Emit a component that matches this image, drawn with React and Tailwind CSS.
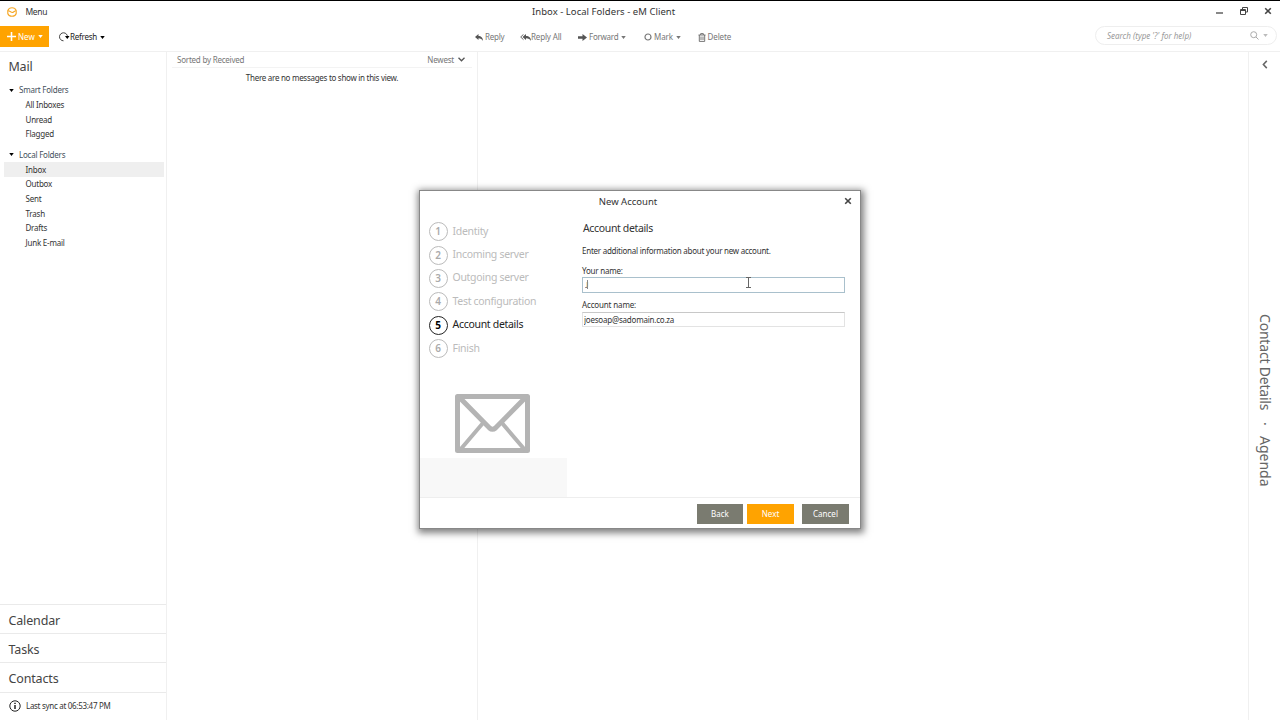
import React, { useState } from 'react';

const smartFolders = ['All Inboxes', 'Unread', 'Flagged'];
const localFolders = ['Inbox', 'Outbox', 'Sent', 'Trash', 'Drafts', 'Junk E-mail'];
const sections = ['Calendar', 'Tasks', 'Contacts'];
const steps = [
  'Identity',
  'Incoming server',
  'Outgoing server',
  'Test configuration',
  'Account details',
  'Finish'
];

const Caret = ({ className }) => (
  <svg viewBox="0 0 6 4" className={`w-[5px] h-[3px] shrink-0 ${className}`} fill="currentColor">
    <path d="M0 0h6L3 4z" />
  </svg>
);

const CloseIcon = ({ className }) => (
  <svg viewBox="0 0 8 8" className={`w-[8px] h-[8px] ${className}`} stroke="currentColor" strokeWidth="1.6">
    <path d="M1.200 1.200l5.600 5.600M6.800 1.200l-5.600 5.600" />
  </svg>
);

const TitleBar = () => (
  <header className="h-[23px] flex items-center border-t border-black shrink-0">
    <div className="w-[532px] flex items-center">
      <svg viewBox="0 0 10 10" className="w-[10px] h-[10px] ml-[6.500px]" fill="none" stroke="#f5a623" strokeWidth="1.100">
        <path d="M.8 3.500C1.600 1.600 3 .8 5 .8s3.500.9 4.200 2.700v3C8.800 8.200 7.500 9.200 5 9.200S1.200 8.200.8 6.500z" />
        <path d="M1 3.800c2 .2 3 1.700 4.200 1.700S7.500 3.800 9 3.800" />
      </svg>
      <span className="ml-[9px] text-[8.500px] tracking-[-0.35px] text-[#333]">Menu</span>
    </div>
    <h1 className="flex-1 text-[9.500px] tracking-[0.04px] text-[#333]">Inbox - Local Folders - eM Client</h1>
    <div className="flex items-center pr-[8px] text-[#444]">
      <span className="w-[7px] h-[2px] bg-[#888] mt-[1px] mr-[17px]" />
      <svg viewBox="0 0 8 8" className="w-[8px] h-[8px] mr-[16px] -mt-[3px]" fill="none" stroke="currentColor">
        <path d="M.5 2.500h5v5h-5zM.5 3.500h5M2.500 2.500v-2h5v4.500h-2" />
      </svg>
      <CloseIcon className="-mt-[3px]" />
    </div>
  </header>
);

const Toolbar = () => (
  <div className="h-[29px] flex items-center shrink-0 border-b border-[#f0f0f0] text-[8px] text-[#777] tracking-[-0.25px]">
    <div className="w-[475px] flex items-center">
      <button className="w-[48.500px] h-[21px] pl-[7px] mb-[1px] flex items-center bg-[#ffa300] text-white">
        <svg viewBox="0 0 8 8" className="w-[9px] h-[9px]" stroke="currentColor" strokeWidth="1.4">
          <path d="M4 0v8M0 4h8" />
        </svg>
        <span className="ml-[2px] tracking-normal">New</span>
        <Caret className="ml-[3px]" />
      </button>
      <button className="ml-[10.500px] flex items-center text-[#222]">
        <svg viewBox="0 0 11 10" className="w-[11px] h-[10px]" fill="none" stroke="#444">
          <path d="M4.500 8.800A4 4 0 1 1 8.500 5" />
          <path d="M6 4h4.500L8.300 7z" fill="#000" stroke="none" />
        </svg>
        <span>Refresh</span>
        <Caret className="ml-[3px] text-black" />
      </button>
    </div>
    <div className="flex-1 flex items-center">
      <button className="w-[45px] flex items-center">
        <svg viewBox="0 0 8 7" className="w-[8px] h-[7px] mr-[2px]" fill="#555">
          <path d="M0 3l3.500-3v2C6 2 8 3.500 8 7 7 5 5.500 4.200 3.500 4.200V6z" />
        </svg>
        <span>Reply</span>
      </button>
      <button className="w-[58px] flex items-center">
        <svg viewBox="0 0 11 7" className="w-[11px] h-[7px]" fill="#555">
          <path d="M2.500 3L6 0v2c3 0 5 1.500 5 5-1-2-2.500-2.800-5-2.800V6z" />
          <path d="M3.500.3L.7 3l2.800 2.700" fill="none" stroke="#555" strokeWidth=".9" />
        </svg>
        <span className="tracking-[-0.15px]">Reply All</span>
      </button>
      <button className="w-[66px] flex items-center">
        <svg viewBox="0 0 9 7" className="w-[9px] h-[7px] mr-[2px]" fill="#555">
          <path d="M0 2.300h4.500V0L9 3.500 4.500 7V4.700H0z" />
        </svg>
        <span>Forward</span>
        <Caret className="ml-[3px]" />
      </button>
      <button className="w-[54px] flex items-center">
        <svg viewBox="0 0 8 8" className="w-[8px] h-[8px] mr-[2px]" fill="none" stroke="currentColor" strokeWidth="1.2">
          <circle cx="4" cy="4" r="3" />
        </svg>
        <span className="tracking-[-0.1px]">Mark</span>
        <Caret className="ml-[3px]" />
      </button>
      <button className="flex items-center">
        <svg viewBox="0 0 8 9" className="w-[8px] h-[9px]" fill="none" stroke="#666" strokeWidth=".9">
          <path d="M.5 2h7M2.700 2V.6h2.600V2M1.300 2v6.400h5.400V2M3 3.500V7M5 3.500V7" />
        </svg>
        <span className="ml-[1.500px] tracking-[-0.1px]">Delete</span>
      </button>
    </div>
    <div className="w-[182px] h-[19px] mr-[3px] mb-[3px] pl-[11px] pr-[8px] flex items-center rounded-full border border-[#eee] text-[#999]">
      <span className="flex-1 italic tracking-normal">Search (type '?' for help)</span>
      <svg viewBox="0 0 9 9" className="w-[9px] h-[9px] mr-[4px]" fill="none" stroke="#aaa">
        <circle cx="3.700" cy="3.700" r="3" />
        <path d="M6 6l2.500 2.500" />
      </svg>
      <Caret className="text-[#bbb]" />
    </div>
  </div>
);

const FolderGroup = ({ title, folders, selected }) => (
  <div className="mb-[6px]">
    <div className="h-[14.660px] pl-[9px] flex items-center text-[#44505c]">
      <Caret className="text-black" />
      <span className="ml-[5px]">{title}</span>
    </div>
    {folders.map((name) => (
      <div
        key={name}
        className={`h-[14.660px] ml-[4px] mr-[2px] pl-[21.500px] flex items-center ${name === selected ? 'bg-[#efefef]' : ''}`}
      >
        {name}
      </div>
    ))}
  </div>
);

const Sidebar = () => (
  <aside className="w-[167px] flex flex-col border-r border-[#f0f0f0] text-[8px] tracking-[-0.22px] text-[#333]">
    <h2 className="h-[31px] pb-[1px] pl-[8.500px] flex items-center text-[12.500px] text-[#444]">Mail</h2>
    <div className="flex-1">
      <FolderGroup title="Smart Folders" folders={smartFolders} />
      <FolderGroup title="Local Folders" folders={localFolders} selected="Inbox" />
    </div>
    {sections.map((name) => (
      <div
        key={name}
        className="h-[29.250px] pt-[4px] pl-[8.500px] flex items-center border-t border-[#eaeaea] text-[12.500px] tracking-[-0.15px] text-[#444]"
      >
        {name}
      </div>
    ))}
    <div className="h-[28.500px] pl-[9px] flex items-center border-t border-[#eaeaea]">
      <svg viewBox="0 0 12 12" className="w-[12px] h-[12px]" fill="none" stroke="#222">
        <circle cx="6" cy="6" r="5.200" />
        <path d="M6 5v4M6 2.800v1.300" strokeWidth="1.500" />
      </svg>
      <span className="ml-[5px] tracking-[-0.3px]">Last sync at 06:53:47 PM</span>
    </div>
  </aside>
);

const MessageList = () => (
  <section className="w-[311px] border-r border-[#f0f0f0] px-[5px] text-[8px] tracking-[-0.22px]">
    <div className="h-[16px] px-[5px] flex items-center justify-between border-b border-[#f3f3f3] text-[#777]">
      <span>Sorted by Received</span>
      <span className="flex items-center">
        Newest
        <svg viewBox="0 0 7 5" className="w-[7px] h-[5px] ml-[4px] mr-[2px]" fill="none" stroke="#555" strokeWidth="1.300">
          <path d="M.5.8l3 3 3-3" />
        </svg>
      </span>
    </div>
    <p className="h-[20px] flex items-center justify-center tracking-[-0.28px] text-[#333]">
      There are no messages to show in this view.
    </p>
  </section>
);

const DetailsRail = () => (
  <aside className="w-[32px] flex flex-col items-center border-l border-[#f0f0f0] text-[#666]">
    <svg viewBox="0 0 6 10" className="w-[6px] h-[9px] mt-[8px]" fill="none" stroke="currentColor" strokeWidth="1.700">
      <path d="M5 1L1.200 5 5 9" />
    </svg>
    <div className="mt-[245px] flex items-center [writing-mode:vertical-rl] text-[14px] tracking-[-0.2px] leading-[18px] whitespace-nowrap">
      <span>Contact Details</span>
      <span className="mt-[12px] mb-[10px]">·</span>
      <span className="tracking-normal">Agenda</span>
    </div>
  </aside>
);

const Steps = ({ current }) => (
  <ol>
    {steps.map((label, i) => (
      <li
        key={label}
        className={`h-[23.350px] flex items-center text-[10.500px] ${i === current ? 'text-[#222]' : 'text-[#bbb]'}`}
      >
        <span
          className={`w-[19px] h-[19px] shrink-0 rounded-full border flex items-center justify-center text-[10px] ${
            i === current ? 'border-[#222] font-bold text-black' : 'border-[#bbb] font-semibold text-[#aaa]'
          }`}
        >
          {i + 1}
        </span>
        <span className="ml-[5px] tracking-[-0.3px]">{label}</span>
      </li>
    ))}
  </ol>
);

const NewAccountDialog = () => {
  const [name, setName] = useState('J');
  const [account, setAccount] = useState('joesoap@sadomain.co.za');

  return (
    <div className="absolute left-[419px] top-[190px] w-[442px] h-[339px] flex flex-col bg-white border border-[#888] shadow-[1px_2px_7px_2px_rgba(0,0,0,0.5)] text-[#333]">
      <div className="h-[22px] pl-[22px] flex items-center justify-center relative text-[9.500px] shrink-0">
        <h2 className="mr-[46px]">New Account</h2>
        <CloseIcon className="absolute right-[8px] top-[6px] text-[#444]" />
      </div>
      <div className="flex-1 flex">
        <div className="w-[147px] flex flex-col">
          <div className="flex-1 pl-[8.500px] pt-[7px]">
            <Steps current={4} />
            <svg viewBox="0 0 75 59" className="w-[75px] h-[59px] ml-[26.500px] mt-[34px]" fill="none" stroke="#b4b4b4">
              <rect x="2.500" y="2.500" width="70" height="54" strokeWidth="5" strokeLinejoin="round" />
              <path d="M5 4l29.500 30q3 2.500 6 0L70 4" strokeWidth="5" />
              <path d="M5 56l23-27M70 56L47 29" strokeWidth="4" />
            </svg>
          </div>
          <div className="h-[39px] bg-[#f8f8f8]" />
        </div>
        <div className="flex-1 pl-[15px] pr-[15px] text-[8px] tracking-[-0.22px]">
          <h3 className="h-[14px] mt-[9px] pl-[1px] flex items-center text-[10.500px] tracking-[-0.35px]">Account details</h3>
          <p className="h-[12px] mt-[8.500px] flex items-center tracking-[-0.25px]">
            Enter additional information about your new account.
          </p>
          <label className="h-[12px] mt-[8px] flex items-center">Your name:</label>
          <div className="relative mt-[0.500px]">
            <input
              value={name}
              onChange={(e) => setName(e.target.value)}
              className="block w-full h-[16px] pb-[1px] px-[2px] border border-[#a9c0cc] outline-none font-['Lato',sans-serif] text-[#555]"
            />
            <span className="absolute left-[5px] top-[3px] w-px h-[9px] bg-[#888]" />
            <svg viewBox="0 0 5 11" className="absolute left-[164px] top-0 w-[5px] h-[11px]" fill="none" stroke="#666">
              <path d="M0 .5h5M0 10.500h5M2.500 0v11" />
            </svg>
          </div>
          <label className="h-[12px] mt-[6px] flex items-center tracking-[-0.15px]">Account name:</label>
          <input
            value={account}
            onChange={(e) => setAccount(e.target.value)}
            className="block w-full h-[15px] mt-[1px] px-[1px] border border-[#e3e3e3] border-t-[#c8c8c8] outline-none"
          />
        </div>
      </div>
      <div className="h-[31px] pt-[2px] pr-[11px] flex items-center justify-end border-t border-[#eee] text-[8px] text-white shrink-0">
        <button className="w-[46px] h-[20px] bg-[#7a7b70]">Back</button>
        <button className="w-[47px] h-[20px] ml-[4px] bg-[#ffa300]">Next</button>
        <button className="w-[47px] h-[20px] ml-[8px] bg-[#7a7b70]">Cancel</button>
      </div>
    </div>
  );
};

const App = () => (
  <div className="relative w-[1280px] h-[720px] flex flex-col overflow-hidden bg-white font-['Noto_Sans',sans-serif]">
    <TitleBar />
    <Toolbar />
    <main className="flex-1 flex min-h-0">
      <Sidebar />
      <MessageList />
      <div className="flex-1" />
      <DetailsRail />
    </main>
    <NewAccountDialog />
  </div>
);

export default App;
